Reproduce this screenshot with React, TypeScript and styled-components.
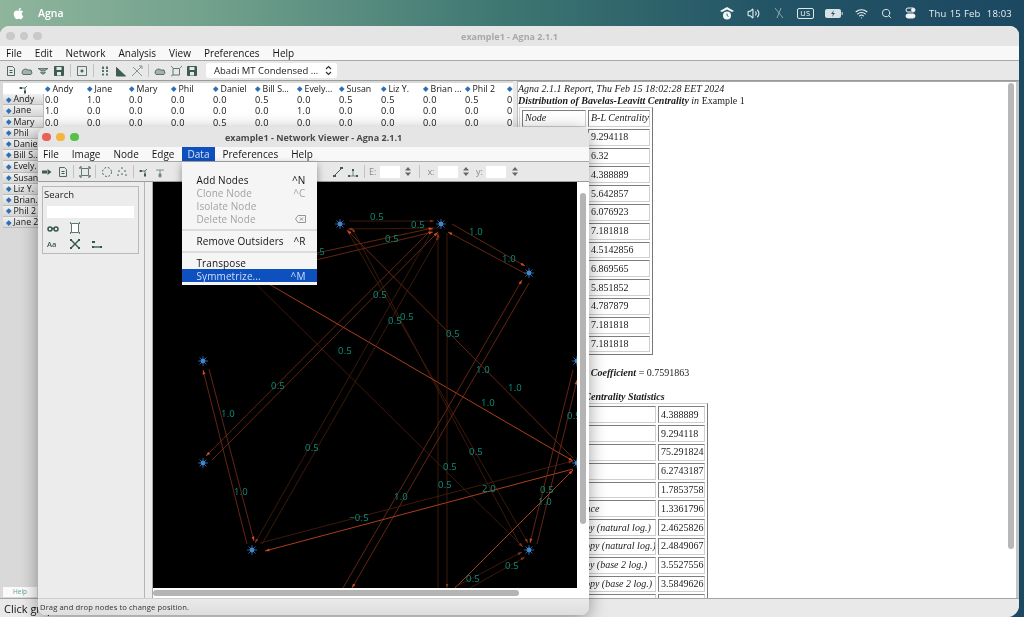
import styled, { createGlobalStyle } from 'styled-components';
import { FaApple } from 'react-icons/fa';
import { Search as SearchIcon, Volume2, Wifi } from 'lucide-react';
import { Fragment } from 'react';
import type { ReactNode } from 'react';

const UI_FONT = '"Open Sans", "Noto Sans", sans-serif';
const SERIF = '"Liberation Serif", serif';

const GlobalStyle = createGlobalStyle`
  html, body {
    margin: 0;
    width: 1024px;
    height: 617px;
    overflow: hidden;
    background: #1d4a62;
  }
`;

const Desktop = styled.div`
  position: relative;
  width: 1024px;
  height: 617px;
  display: flex;
  flex-direction: column;
  overflow: hidden;
  font-family: ${UI_FONT};
  color: #141414;
  background: linear-gradient(90deg, #8fb59c 0%, #6f9f8b 22%, #3c7571 50%, #235466 75%, #1c4862 100%);
  filter: blur(0.35px);
`;

const TopBar = styled.header`
  height: 26px;
  flex: none;
  display: flex;
  align-items: center;
  color: #fff;
  font-size: 10.5px;
  padding: 0 12px 0 12px;
`;

const AppName = styled.b`
  margin-left: 13px;
  font-weight: 600;
  font-size: 10.5px;
`;

const TopStatus = styled.div`
  margin-left: auto;
  display: flex;
  align-items: center;
  gap: 13px;
`;

const KeyboardBadge = styled.span`
  border: 1px solid #dfe8ea;
  border-radius: 2px;
  font-size: 7.5px;
  line-height: 9px;
  padding: 0 2.5px;
  margin: 0 -1px;
  letter-spacing: 0.4px;
`;

const BatterySvg = styled.svg`
  margin: 0 -1px;
`;

const Clock = styled.span`
  word-spacing: 0.4px;
  font-size: 9.5px;
  letter-spacing: 0.2px;
  color: #e8eef0;
`;

const MainWindow = styled.section`
  flex: 1;
  margin-right: 5px;
  display: flex;
  flex-direction: column;
  min-height: 0;
  background: #e9e9e9;
  border-radius: 9px 9px 12px 0;
  overflow: hidden;
`;

const TitleBar = styled.div<{ $active?: boolean }>`
  height: 20px;
  flex: none;
  display: flex;
  align-items: center;
  position: relative;
  padding-left: 6px;
  gap: 5px;
  background: #e4e5e4;
  color: ${p => (p.$active ? '#4a4a4a' : '#a8a8a8')};
`;

const TitleText = styled.span`
  position: absolute;
  left: 0;
  right: 0;
  text-align: center;
  font-size: 9px;
  font-weight: 700;
`;

const Light = styled.i<{ $color: string }>`
  width: 8.5px;
  height: 8.5px;
  border-radius: 50%;
  background: ${p => p.$color};
  display: block;
`;

const MenuBar = styled.nav<{ $inset?: number }>`
  height: 14px;
  flex: none;
  display: flex;
  align-items: center;
  background: #f8f8f8;
  border-bottom: 1px solid #a9a9a9;
  padding-left: ${p => p.$inset ?? 6}px;
  gap: 13px;
  font-size: 10px;
`;

const ToolBar = styled.div`
  height: 19px;
  flex: none;
  display: flex;
  align-items: center;
  background: #e8e8e8;
  border-bottom: 1px solid #9b9b9b;
  padding-left: 5px;
  gap: 4px;
  color: #3d5c54;
`;

const ToolSep = styled.i`
  width: 1px;
  height: 13px;
  margin: 0 1px;
  background: #c2c2c2;
`;

const FontSelect = styled.div`
  margin-left: 4px;
  width: 131px;
  height: 15px;
  flex: none;
  box-sizing: border-box;
  padding: 0 5px 0 8px;
  background: #fff;
  border-radius: 3px;
  display: flex;
  align-items: center;
  justify-content: space-between;
  color: #222;
  font-size: 9.5px;
`;

const MainBody = styled.div`
  flex: 1;
  min-height: 0;
  display: flex;
`;

const MatrixPane = styled.div`
  width: 513px;
  flex: none;
  display: flex;
  flex-direction: column;
  background: #d9d9d9;
  padding: 2px 0 1px 3px;
  box-sizing: border-box;
  overflow: hidden;
`;

const MatrixGrid = styled.div`
  display: grid;
  grid-template-columns: 41px repeat(12, 42px);
  grid-auto-rows: 11.2px;
  padding-bottom: 1px;
`;

const CornerCell = styled.div`
  background: #fff;
  display: flex;
  align-items: center;
  justify-content: center;
  color: #32524a;
  height: 12px;
`;

const ColHead = styled.div`
  display: flex;
  align-items: center;
  gap: 3px;
  padding-left: 2px;
  font-size: 8.8px;
  background: #fff;
  white-space: nowrap;
  overflow: hidden;
`;

const RowHead = styled.div`
  display: flex;
  align-items: center;
  gap: 3px;
  padding-left: 4px;
  font-size: 8.8px;
  background: linear-gradient(#f0f0f0, #d6d6d6);
  border: 1px solid #bdbdbd;
  border-width: 0 1px 1px 0;
  white-space: nowrap;
  overflow: hidden;
`;

const DataCell = styled.div`
  background: #fff;
  font-size: 9.2px;
  line-height: 11px;
  padding-left: 1px;
  letter-spacing: 0.3px;
`;

const RowRest = styled.div`
  grid-column: 2 / -1;
`;

const Diamond = styled.i`
  width: 3.5px;
  height: 3.5px;
  flex: none;
  transform: rotate(45deg);
  background: #2d6fb3;
`;

const PaneFill = styled.div`
  flex: 1;
`;

const HelpButton = styled.div`
  width: 34px;
  height: 10px;
  background: #fafafa;
  color: #5f9f9c;
  font-size: 6.5px;
  line-height: 10px;
  text-align: center;
`;

const Report = styled.article`
  flex: 1;
  margin-left: 4px;
  padding-top: 1px;
  background: #fff;
  border-left: 1px solid #bcbcbc;
  border-right: 3px solid #c6c6c6;
  border-top: 1px solid #a8a8a8;
  font-family: ${SERIF};
  font-size: 10px;
  line-height: 12px;
  color: #1a1a1a;
  position: relative;
  overflow: hidden;
`;

const ReportThumb = styled.i`
  position: absolute;
  top: 1px;
  right: 2px;
  width: 6px;
  height: 466px;
  background: #b8b8b8;
  border-radius: 3px;
`;

const ReportLine = styled.div<{ $gap?: number }>`
  margin-top: ${p => p.$gap ?? 0}px;
`;

const StatTable = styled.table<{ $first: number; $second: number }>`
  margin-left: 1px;
  border: 1px solid;
  border-color: #d4d4d4 #777 #777 #d4d4d4;
  border-spacing: 2px;
  border-collapse: separate;
  table-layout: fixed;
  width: ${p => p.$first + p.$second + 8}px;
  font-size: 10px;
  td {
    height: 16.8px;
    box-sizing: border-box;
    padding: 0 2px;
    border: 1px solid;
    border-color: #7d7d7d #cfcfcf #cfcfcf #7d7d7d;
    white-space: nowrap;
    overflow: hidden;
  }
  td:first-child {
    width: ${p => p.$first}px;
    font-style: italic;
  }
  td:last-child {
    width: ${p => p.$second}px;
  }
`;

const HeadCell = styled.td`
  font-style: italic;
`;

const MainStatus = styled.footer`
  height: 19px;
  flex: none;
  border-top: 1px solid #a6a6a6;
  box-sizing: border-box;
  display: flex;
  align-items: center;
  padding-left: 4px;
  font-size: 11px;
  background: #e9e9e9;
`;

/* second window floats over the first one */
const ViewerWindow = styled.section`
  position: absolute;
  left: 38px;
  top: 127px;
  width: 551px;
  height: 488px;
  display: flex;
  flex-direction: column;
  background: #ececec;
  border-radius: 9px 9px 8px 8px;
  box-shadow: 0 4px 18px rgba(0, 0, 0, 0.38);
`;

const ViewerTitleBar = styled(TitleBar)`
  padding-left: 4px;
  gap: 5.5px;
  border-radius: 9px 9px 0 0;
`;

const MenuEntry = styled.div<{ $open?: boolean }>`
  position: relative;
  padding: 0 6px;
  margin: 0 -6px;
  height: 14px;
  line-height: 14px;
  background: ${p => (p.$open ? '#0f50bf' : 'transparent')};
  color: ${p => (p.$open ? '#d5e2f8' : 'inherit')};
`;

const Dropdown = styled.div`
  position: absolute;
  left: 0;
  top: 15px;
  width: 135px;
  height: 123px;
  box-sizing: border-box;
  padding-top: 11px;
  background: #f5f5f5;
  box-shadow: 0 3px 8px rgba(0, 0, 0, 0.4);
  color: #141414;
  z-index: 5;
`;

const DropItem = styled.div<{ $disabled?: boolean; $selected?: boolean }>`
  height: 13px;
  display: flex;
  align-items: center;
  justify-content: space-between;
  padding: 0 11px 0 15px;
  font-size: 10px;
  letter-spacing: 0.1px;
  color: ${p => (p.$selected ? '#cfdff7' : p.$disabled ? '#a3a3a3' : '#141414')};
  background: ${p => (p.$selected ? '#0f50bf' : 'transparent')};
`;

const DropSep = styled.div`
  height: 2px;
  margin: 3.5px 0 3.5px;
  background: #dcdcdc;
`;

const ViewerTools = styled(ToolBar)`
  padding-left: 3px;
  gap: 3.5px;
  font-size: 9px;
`;

const SpinLabel = styled.span<{ $indent?: number }>`
  color: #8c8c8c;
  margin-left: ${p => p.$indent ?? 0}px;
`;

const SpinInput = styled.i`
  width: 20px;
  height: 12px;
  background: #fff;
  display: block;
  flex: none;
`;

const SpinSvg = styled.svg`
  flex: none;
  margin: 0 2px 0 1px;
`;

const MenuSpacer = styled.div`
  width: 159px;
  flex: none;
`;

const ViewerBody = styled.div`
  flex: 1;
  min-height: 0;
  display: flex;
`;

const SidePanel = styled.aside`
  width: 107px;
  flex: none;
  box-sizing: border-box;
  padding: 4px 5px 0 4px;
  border-right: 1px solid #b5b5b5;
`;

const SearchBox = styled.div`
  height: 68px;
  border: 1px solid #b9b9b9;
  box-sizing: border-box;
  padding: 1px 1px;
  font-size: 9.5px;
  color: #222;
`;

const SearchInput = styled.div`
  height: 12px;
  margin: 5px 0 2px 3px;
  width: 87px;
  background: #fff;
`;

const SearchTools = styled.div`
  display: flex;
  gap: 10px;
  height: 16px;
  align-items: center;
  padding-left: 3px;
  color: #35564e;
`;

const AaTool = styled.span`
  font-size: 7.5px;
  width: 12px;
  font-weight: 600;
`;

const Splitter = styled.div`
  width: 8px;
  flex: none;
  border-right: 1px solid #a9a9a9;
  box-sizing: border-box;
`;

const CanvasArea = styled.div`
  flex: 1;
  display: grid;
  grid-template-columns: 424px 12px;
  grid-template-rows: 406px 1fr;
  background: #fff;
  min-width: 0;
`;

const NetworkSvg = styled.svg`
  display: block;
  background: #000;
  width: 424px;
  height: 406px;
`;

const VerticalTrack = styled.div`
  padding: 11px 3px 0 3px;
`;

const VerticalThumb = styled.div`
  height: 331px;
  border-radius: 3px;
  background: #b4b4b4;
`;

const HorizontalTrack = styled.div`
  grid-column: 1 / span 2;
  padding: 2px 0 0 0;
`;

const HorizontalThumb = styled.div`
  width: 366px;
  height: 6px;
  border-radius: 3px;
  background: #b4b4b4;
`;

const ViewerStatus = styled.footer`
  height: 17px;
  flex: none;
  box-sizing: border-box;
  border-top: 1px solid #cfcfcf;
  padding-left: 2px;
  display: flex;
  align-items: center;
  font-size: 7.6px;
  letter-spacing: 0.12px;
  color: #333;
  border-radius: 0 0 8px 8px;
  background: linear-gradient(#e9e9e9, #dedede);
`;

const EdgeLabel = styled.text`
  font-family: ${UI_FONT};
  font-size: 9.5px;
  fill: #0c8f7c;
  text-anchor: middle;
  dominant-baseline: middle;
  letter-spacing: 0.2px;
`;

const GlyphSvg = styled.svg`
  flex: none;
`;

const icons: Record<string, ReactNode> = {
  doc: <><path d="M2.5 1.5h5l2 2v7h-7z" strokeWidth=".9" /><path d="M4.5 5.5h3M4.5 7.5h3" /></>,
  open: <><path d="M1 8c0-3 2-4 4-4l2 1h3l1 3-1 1.5H2z" fill="currentColor" fillOpacity=".4" strokeWidth=".8" /></>,
  funnel: <><path d="M1 3.5h10L8 5.5H4zM3.5 7h5L7 9H5z" fill="currentColor" fillOpacity=".5" strokeWidth=".7" /></>,
  save: <><path d="M1.5 1.5h9v9h-9z" fill="currentColor" /><path d="M3.5 2h5v3h-5zM4 7h4v3.5H4z" fill="#e8e8e8" stroke="none" /></>,
  fit: <><path d="M1.5 1.5h9v9h-9z" strokeWidth=".8" /><path d="M4.5 6l1.5-1.5L7.5 6 6 7.5z" fill="currentColor" strokeWidth=".6" /></>,
  dots: <><path d="M4 1.5v2.5M4 5v2M4 8.5v2M8 1.5v2.5M8 5v2M8 8.5v2" strokeWidth="1.7" /></>,
  slope: <><path d="M1.5 11V2.5L10.5 11z" fill="currentColor" /></>,
  cross: <><path d="M1 11L10 2M2 2l9 9M8 1h3v3" strokeWidth=".6" /></>,
  target: <><path d="M3 3.5h6.5v6.5H3z" strokeWidth=".8" /><path d="M1 1l2 2M10 3l2-2M3 10l-2 1" strokeWidth=".7" /></>,
  frame: <><path d="M2.5 2.5h7v7h-7z" strokeWidth=".8" /><path d="M1 1h2M9 1h2M1 11h2M9 11h2M1 1v2M11 1v2M1 9v2M11 9v2" strokeWidth="1.1" /></>,
  circle: <><circle cx="6" cy="6" r="4.5" strokeDasharray="1.8 1.8" strokeWidth="1" /></>,
  scatter: <><path d="M6 2v.1M3 5v.1M9 5v.1M2 9v.1M6 8v.1M10 9v.1" strokeWidth="1.6" strokeLinecap="round" /></>,
  nodeAdd: <><path d="M1 5h6M7 5v4M7 5l2-2" strokeWidth=".8" /><path d="M2 4h2v2H2zM6 7.5h2v3H6z" fill="currentColor" stroke="none" /><path d="M10 1v.1" strokeWidth="1.5" /></>,
  nodeDel: <><path d="M2 4h8M6 4v6" opacity=".6" /><path d="M5 8h2v3H5z" fill="currentColor" opacity=".6" /></>,
  export: <><path d="M1 4.5h5v3H1z" fill="currentColor" stroke="none" /><path d="M6.5 3L10.5 6l-4 3z" fill="currentColor" stroke="none" /></>,
  line: <><path d="M2 10l8-8" /><path d="M1 9h3v2H1zM8 1h3v2H8z" fill="currentColor" stroke="none" /></>,
  linked: <><path d="M2 10h8M6 4v6" strokeWidth=".7" /><path d="M5 3h2v2H5zM1 9h2v2H1zM9 9h2v2H9z" fill="currentColor" stroke="none" /></>,
  binoculars: <><circle cx="3" cy="7" r="2" strokeWidth="1.5" /><circle cx="9" cy="7" r="2" strokeWidth="1.5" /><path d="M5 6.5h2" strokeWidth="1.5" /></>,
  selectBox: <><path d="M2.5 1.5h7v9h-7z" fill="#fff" strokeWidth=".8" /><path d="M1 1h1M10 1h1M1 11h1M10 11h1" strokeWidth="1.4" /></>,
  crossNodes: <><path d="M2 2l8 8M10 2l-8 8" strokeWidth="1.4" /><path d="M1 1h2v2H1zM9 1h2v2H9zM1 9h2v2H1zM9 9h2v2H9z" fill="currentColor" stroke="none" /></>,
  sliderNodes: <><path d="M1 9h10" strokeWidth="1.3" /><path d="M1 3h3v2H1zM1 8h2v2H1zM9 8h2v2H9z" fill="currentColor" stroke="none" /></>,
};

const Tool = ({ name }: { name: string }) => (
  <GlyphSvg width="12" height="12" viewBox="0 0 12 12" fill="none" stroke="currentColor" strokeWidth="1">
    {icons[name]}
  </GlyphSvg>
);

const Chevrons = () => (
  <GlyphSvg width="7" height="11" viewBox="0 0 7 11" fill="none" stroke="#333" strokeWidth="1.2">
    <path d="M1 4l2.5-2.5L6 4M1 7l2.5 2.5L6 7" />
  </GlyphSvg>
);

const SpinArrows = () => (
  <SpinSvg width="8" height="11" viewBox="0 0 8 11" fill="#666">
    <path d="M4 1l3 3.5H1zM4 10L1 6.5h6z" />
  </SpinSvg>
);

const nodes = [
  [340, 224], [441, 224], [529, 273], [203, 361], [577, 361],
  [203, 463], [252, 550], [529, 550], [577, 463],
];

// x1, y1, x2, y2, strength (0 faint, 1 mid, 2 strong); arrow sits at the second point
const edges: number[][] = [
  [349, 221, 434, 221, 0], [441, 228, 348, 229, 0],
  [452, 224, 525, 266, 1], [526, 274, 448, 232, 1],
  [247, 544, 203, 370, 1], [209, 369, 254, 541, 1],
  [433, 228, 206, 456, 1], [212, 460, 438, 232, 1],
  [347, 230, 528, 543, 0], [520, 545, 352, 228, 0],
  [573, 458, 347, 230, 1], [262, 280, 573, 461, 2],
  [250, 278, 523, 547, 0], [433, 229, 255, 543, 0], [262, 544, 439, 236, 0],
  [438, 588, 438, 233, 0], [447, 233, 447, 588, 0],
  [343, 588, 522, 280, 1], [529, 283, 352, 588, 1],
  [573, 469, 265, 551, 2], [260, 543, 573, 461, 0],
  [455, 588, 573, 470, 2],
  [573, 370, 530, 543, 1], [537, 544, 577, 380, 1],
  [470, 588, 525, 557, 0], [455, 587, 522, 552, 0],
  [200, 278, 433, 228, 1], [220, 283, 433, 232, 1],
];

const labels = [
  [377, 217, '0.5'], [418, 225, '0.5'], [392, 239, '0.5'], [318, 252, '0.5'], [476, 232, '1.0'],
  [509, 259, '1.0'], [380, 295, '0.5'], [395, 321, '0.5'], [407, 317, '0.5'], [345, 351, '0.5'],
  [453, 334, '0.5'], [278, 386, '0.5'], [483, 370, '1.0'], [515, 388, '1.0'], [488, 403, '1.0'],
  [228, 414, '1.0'], [241, 492, '1.0'], [312, 448, '0.5'], [476, 452, '0.5'], [450, 467, '0.5'],
  [445, 485, '0.5'], [489, 489, '2.0'], [547, 490, '0.5'], [545, 502, '1.0'], [401, 497, '1.0'],
  [359, 518, '−0.5'], [512, 566, '0.5'], [473, 579, '0.5'], [574, 416, '0.5'],
] as const;

const edgeColors = ['#4c1e0d', '#7f2f15', '#ab3e1a'];

const NetworkCanvas = () => (
  <NetworkSvg viewBox="153 182 424 406">
    <defs>
      {edgeColors.map((c, i) => (
        <marker key={c} id={`tip${i}`} markerUnits="userSpaceOnUse" markerWidth="5" markerHeight="4" refX="4.5" refY="2" orient="auto">
          <path d="M0 .5L4.5 2 0 3.5z" fill={i === 0 ? '#8a3316' : '#d44a1d'} />
        </marker>
      ))}
    </defs>
    {edges.map(([x1, y1, x2, y2, s]) => (
      <line
        key={`${x1}-${y1}-${x2}-${y2}`}
        x1={x1}
        y1={y1}
        x2={x2}
        y2={y2}
        stroke={edgeColors[s]}
        strokeWidth={s === 2 ? 1 : 0.8}
        markerEnd={`url(#tip${s})`}
      />
    ))}
    {labels.map(([x, y, t]) => (
      <EdgeLabel key={`${x}-${y}`} x={x} y={y}>{t}</EdgeLabel>
    ))}
    {nodes.map(([x, y]) => (
      <g key={`${x}-${y}`} stroke="#2a6aa8" strokeWidth="0.9">
        <path d={`M${x - 5} ${y}h10M${x} ${y - 5}v10M${x - 3.5} ${y - 3.5}l7 7M${x + 3.5} ${y - 3.5}l-7 7`} />
        <circle cx={x} cy={y} r="2.4" fill="#3f86cf" stroke="none" />
      </g>
    ))}
  </NetworkSvg>
);

const people = ['Andy', 'Jane', 'Mary', 'Phil', 'Daniel', 'Bill S...', 'Evely...', 'Susan', 'Liz Y.', 'Brian ...', 'Phil 2', 'Jane 2'];
const rowNames = ['Andy', 'Jane', 'Mary', 'Phil', 'Danie', 'Bill S..', 'Evely.', 'Susan', 'Liz Y.', 'Brian.', 'Phil 2', 'Jane 2'];
const matrix: number[][] = [
  [0, 1, 0, 0, 0, 0.5, 0, 0.5, 0.5, 0, 0.5, 0],
  [1, 0, 0, 0, 0, 0, 1, 0, 0, 0, 0, 0],
  [0, 0, 0, 0, 0.5, 0, 0, 0, 0, 0, 0, 0],
];

const centrality = ['9.294118', '6.32', '4.388889', '5.642857', '6.076923', '7.181818', '4.5142856', '6.869565', '5.851852', '4.787879', '7.181818', '7.181818'];
const fullNames = ['Andy', 'Jane', 'Mary', 'Phil', 'Daniel', 'Bill Smith', 'Evelyn', 'Susan', 'Liz Y.', 'Brian', 'Phil 2', 'Jane 2'];
const stats = [
  ['Minimum', '4.388889'],
  ['Maximum', '9.294118'],
  ['Sum', '75.291824'],
  ['Mean', '6.2743187'],
  ['Variance', '1.7853758'],
  ['Standard Variance', '1.3361796'],
  ['Shannon Entropy (natural log.)', '2.4625826'],
  ['Maximum Entropy (natural log.)', '2.4849067'],
  ['Shannon Entropy (base 2 log.)', '3.5527556'],
  ['Maximum Entropy (base 2 log.)', '3.5849626'],
  ['', ''],
];

const mainMenu = ['File', 'Edit', 'Network', 'Analysis', 'View', 'Preferences', 'Help'];
const viewerMenu = ['File', 'Image', 'Node', 'Edge', 'Data', 'Preferences', 'Help'];

const DataMenu = () => (
  <Dropdown>
    <DropItem><span>Add Nodes</span><span>^N</span></DropItem>
    <DropItem $disabled><span>Clone Node</span><span>^C</span></DropItem>
    <DropItem $disabled><span>Isolate Node</span></DropItem>
    <DropItem $disabled>
      <span>Delete Node</span>
      <svg width="11" height="8" viewBox="0 0 11 8" fill="none" stroke="#8a8a8a" strokeWidth=".9">
        <path d="M3 .5h7.5v7H3L.5 4zM5 2.5l3 3M8 2.5l-3 3" />
      </svg>
    </DropItem>
    <DropSep />
    <DropItem><span>Remove Outsiders</span><span>^R</span></DropItem>
    <DropSep />
    <DropItem><span>Transpose</span></DropItem>
    <DropItem $selected><span>Symmetrize...</span><span>^M</span></DropItem>
  </Dropdown>
);

const Viewer = () => (
  <ViewerWindow>
    <ViewerTitleBar $active>
      <Light $color="#ec5f56" />
      <Light $color="#f5b43c" />
      <Light $color="#58c144" />
      <TitleText>example1 - Network Viewer - Agna 2.1.1</TitleText>
    </ViewerTitleBar>
    <MenuBar $inset={5}>
      {viewerMenu.map(m => (
        <MenuEntry key={m} $open={m === 'Data'}>
          {m}
          {m === 'Data' && <DataMenu />}
        </MenuEntry>
      ))}
    </MenuBar>
    <ViewerTools>
      <Tool name="export" />
      <Tool name="doc" />
      <ToolSep />
      <Tool name="frame" />
      <ToolSep />
      <Tool name="circle" />
      <Tool name="scatter" />
      <ToolSep />
      <Tool name="nodeAdd" />
      <Tool name="nodeDel" />
      <MenuSpacer />
      <Tool name="line" />
      <Tool name="linked" />
      <ToolSep />
      <SpinLabel>E:</SpinLabel>
      <SpinInput />
      <SpinArrows />
      <ToolSep />
      <SpinLabel $indent={3}>x:</SpinLabel>
      <SpinInput />
      <SpinArrows />
      <SpinLabel>y:</SpinLabel>
      <SpinInput />
      <SpinArrows />
    </ViewerTools>
    <ViewerBody>
      <SidePanel>
        <SearchBox>
          Search
          <SearchInput />
          <SearchTools>
            <Tool name="binoculars" />
            <Tool name="selectBox" />
          </SearchTools>
          <SearchTools>
            <AaTool>Aa</AaTool>
            <Tool name="crossNodes" />
            <Tool name="sliderNodes" />
          </SearchTools>
        </SearchBox>
      </SidePanel>
      <Splitter />
      <CanvasArea>
        <NetworkCanvas />
        <VerticalTrack>
          <VerticalThumb />
        </VerticalTrack>
        <HorizontalTrack>
          <HorizontalThumb />
        </HorizontalTrack>
      </CanvasArea>
    </ViewerBody>
    <ViewerStatus>Drag and drop nodes to change position.</ViewerStatus>
  </ViewerWindow>
);

const App = () => (
  <Desktop>
    <GlobalStyle />
    <TopBar>
      <FaApple size={13} />
      <AppName>Agna</AppName>
      <TopStatus>
        <svg width="14" height="13" viewBox="0 0 14 13" fill="#f2f6f6">
          <path d="M7 0l7 4-2 1-5-2.6L2 5 0 4z" />
          <circle cx="7" cy="8.5" r="4" />
          <path d="M7 6.5v2l1.5 1" stroke="#2f6a6e" fill="none" />
        </svg>
        <Volume2 size={13} color="#e8eef0" />
        <svg width="12" height="12" viewBox="0 0 12 12" fill="none" stroke="#8aa7ad" strokeWidth="1">
          <path d="M2 1l8 10M8 1L4 11" />
        </svg>
        <KeyboardBadge>US</KeyboardBadge>
        <BatterySvg width="18" height="9" viewBox="0 0 18 9">
          <rect x="0" y="0" width="16" height="9" rx="2" fill="#d8e2e4" />
          <rect x="16.5" y="3" width="1.5" height="3" fill="#9cb2b8" />
          <path d="M9 1L6 5h2L7 8l3-4H8z" fill="#255468" />
        </BatterySvg>
        <Wifi size={13} color="#f2f6f6" />
        <SearchIcon size={11} color="#e8eef0" />
        <svg width="11" height="12" viewBox="0 0 11 12" fill="none" stroke="#f2f6f6">
          <rect x="1" y="1" width="9" height="4" rx="2" />
          <rect x="1" y="7" width="9" height="4" rx="2" fill="#f2f6f6" />
          <circle cx="8" cy="3" r="1.4" fill="#f2f6f6" />
        </svg>
        <Clock>Thu 15 Feb&nbsp; 18:03</Clock>
      </TopStatus>
    </TopBar>

    <MainWindow>
      <TitleBar>
        <Light $color="#c9c9c9" />
        <Light $color="#c9c9c9" />
        <Light $color="#c9c9c9" />
        <TitleText>example1 - Agna 2.1.1</TitleText>
      </TitleBar>
      <MenuBar>
        {mainMenu.map(m => <span key={m}>{m}</span>)}
      </MenuBar>
      <ToolBar>
        <Tool name="doc" />
        <Tool name="open" />
        <Tool name="funnel" />
        <Tool name="save" />
        <ToolSep />
        <Tool name="fit" />
        <ToolSep />
        <Tool name="dots" />
        <Tool name="slope" />
        <Tool name="cross" />
        <ToolSep />
        <Tool name="open" />
        <Tool name="target" />
        <Tool name="save" />
        <FontSelect>
          Abadi MT Condensed ...
          <Chevrons />
        </FontSelect>
      </ToolBar>
      <MainBody>
        <MatrixPane>
          <MatrixGrid>
            <CornerCell><Tool name="nodeAdd" /></CornerCell>
            {people.map(p => (
              <ColHead key={p}><Diamond />{p}</ColHead>
            ))}
            {rowNames.map((name, r) => (
              <Fragment key={name}>
                <RowHead><Diamond />{name}</RowHead>
                {r < 3
                  ? people.map((p, c) => (
                      <DataCell key={p}>{matrix[r][c].toFixed(1)}</DataCell>
                    ))
                  : <RowRest />}
              </Fragment>
            ))}
          </MatrixGrid>
          <PaneFill />
          <HelpButton>Help</HelpButton>
        </MatrixPane>
        <Report>
          <ReportThumb />
          <ReportLine><i>Agna 2.1.1 Report, Thu Feb 15 18:02:28 EET 2024</i></ReportLine>
          <ReportLine>
            <b><i>Distribution of Bavelas-Leavitt Centrality</i></b> <i>in</i> Example 1
          </ReportLine>
          <StatTable $first={64} $second={62}>
            <tbody>
              <tr><HeadCell>Node</HeadCell><HeadCell>B-L Centrality</HeadCell></tr>
              {centrality.map((v, i) => (
                <tr key={i}><td>{fullNames[i]}</td><td>{v}</td></tr>
              ))}
            </tbody>
          </StatTable>
          <ReportLine $gap={12}><b><i>Group Centrality Coefficient</i></b> = 0.7591863</ReportLine>
          <ReportLine $gap={12}><b><i>Bavelas-Leavitt Centrality Statistics</i></b></ReportLine>
          <StatTable $first={134} $second={47}>
            <tbody>
              {stats.map(([k, v], i) => (
                <tr key={i}><td>{k}</td><td>{v}</td></tr>
              ))}
            </tbody>
          </StatTable>
        </Report>
      </MainBody>
      <MainStatus>Click graph</MainStatus>
    </MainWindow>

    <Viewer />
  </Desktop>
);

export default App;
